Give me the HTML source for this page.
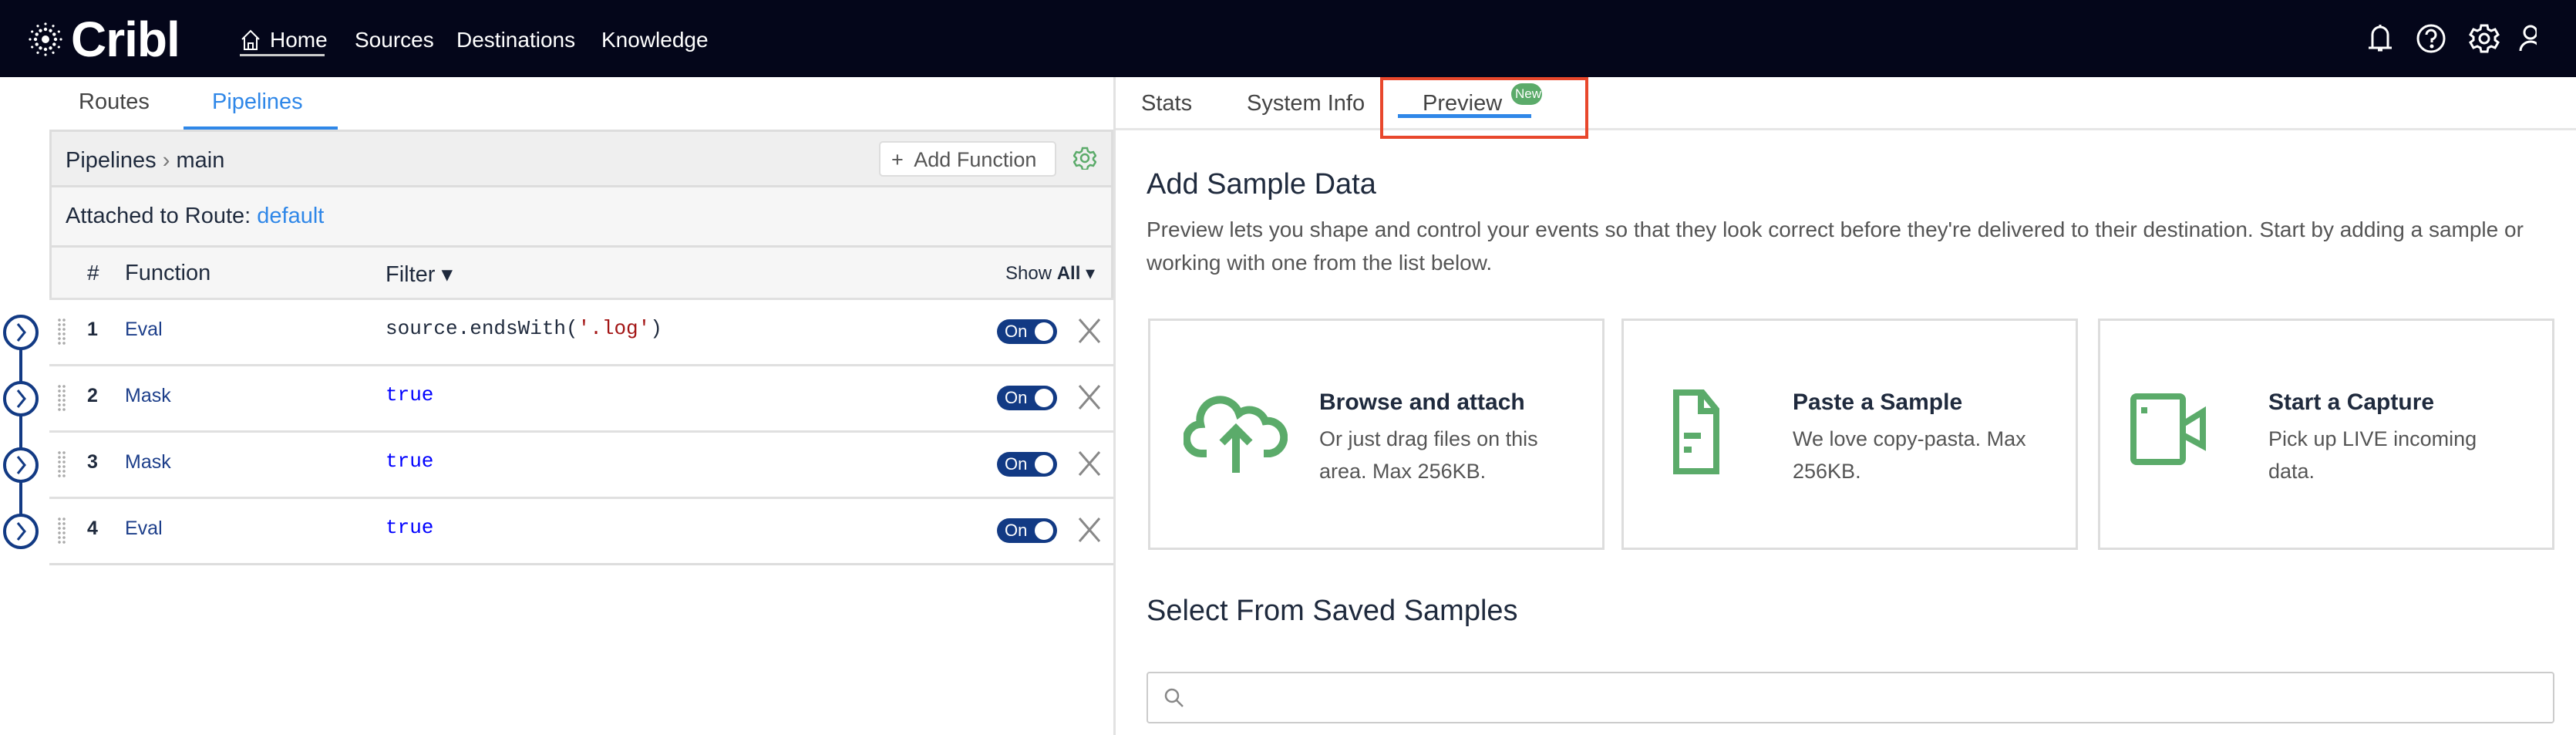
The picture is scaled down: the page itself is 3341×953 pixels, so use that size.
<!DOCTYPE html>
<html><head><meta charset="utf-8"><style>
*{box-sizing:border-box;margin:0;padding:0}
body{width:3341px;height:953px;overflow:hidden;background:#fff;font-family:"Liberation Sans",sans-serif;position:relative;color:#1f2a3d}
.a{position:absolute;white-space:nowrap}
.nav{left:0;top:0;width:3341px;height:100px;background:#04061a}
.nt{color:#fff;font-size:28px;top:36px}
.tab{font-size:29px;color:#444}
.row{left:64px;width:1380px;height:86px;border-top:3px solid #e0e0e0;background:#fff}
.num{font-weight:bold;font-size:25px;color:#1f2a3d}
.fn{font-size:25px;color:#1c3e8a}
.mono{font-family:"Liberation Mono",monospace;font-size:26px}
.tog{width:78px;height:32px;border-radius:16px;background:#123a84;color:#fff;font-size:22px;padding:3px 0 0 10px}
.tog::after{content:"";position:absolute;right:5px;top:4px;width:24px;height:24px;border-radius:50%;background:#fff}
.card{border:3px solid #ddd;top:413px;height:300px;width:592px}
.ct{font-size:30px;font-weight:bold;color:#1f2a3d}
.cd{font-size:27px;color:#555;line-height:42px;white-space:normal}
.drag{left:74px;width:12px;height:36px;background:radial-gradient(circle,#aaa 1.6px,transparent 2px) 0 0/6px 6px}
</style></head><body>
<div class="a nav"></div>
<svg class="a" style="left:36px;top:28px" width="46" height="46" viewBox="0 0 46 46"><g fill="#fff"><circle cx="23" cy="23" r="5"/>
<g id="r"><circle cx="23" cy="10" r="2.2"/><circle cx="23" cy="3" r="1.6"/></g>
<use href="#r" transform="rotate(30 23 23)"/><use href="#r" transform="rotate(60 23 23)"/><use href="#r" transform="rotate(90 23 23)"/><use href="#r" transform="rotate(120 23 23)"/><use href="#r" transform="rotate(150 23 23)"/><use href="#r" transform="rotate(180 23 23)"/><use href="#r" transform="rotate(210 23 23)"/><use href="#r" transform="rotate(240 23 23)"/><use href="#r" transform="rotate(270 23 23)"/><use href="#r" transform="rotate(300 23 23)"/><use href="#r" transform="rotate(330 23 23)"/></g></svg>
<div class="a" style="left:92px;top:14px;color:#fff;font-size:64px;font-weight:bold;letter-spacing:-1px">Cribl</div>
<svg class="a" style="left:312px;top:38px" width="26" height="28" viewBox="0 0 26 28" fill="none" stroke="#fff" stroke-width="2"><path d="M2 13L13 2l11 11M5 11v15h16V11M10 26v-8h6v8"/></svg>
<div class="a nt" style="left:350px">Home</div>
<div class="a" style="left:311px;top:70px;width:110px;height:3px;background:#ccc"></div>
<div class="a nt" style="left:460px">Sources</div>
<div class="a nt" style="left:592px">Destinations</div>
<div class="a nt" style="left:780px">Knowledge</div>
<svg class="a" style="left:3070px;top:30px" width="220" height="40" viewBox="0 0 220 40" fill="none" stroke="#fff" stroke-width="3">
<path d="M7 32V15a10 10 0 0 1 20 0v17zM2 32h30M14 35h6M17 2v3"/>
<circle cx="83" cy="20" r="17"/><path d="M77 15a6 6 0 1 1 7 6v4"/><circle cx="84" cy="30" r="1" fill="#fff"/>
<circle cx="152" cy="20" r="6"/><path d="M148 3h8l1 5 4 2 5-2 4 7-4 3v4l4 3-4 7-5-2-4 2-1 5h-8l-1-5-4-2-5 2-4-7 4-3v-4l-4-3 4-7 5 2 4-2z"/>
<circle cx="212" cy="12" r="8"/><path d="M199 36a13 12 0 0 1 26 0"/></svg>

<div class="a tab" style="left:102px;top:116px">Routes</div>
<div class="a tab" style="left:275px;top:116px;color:#2f87e8">Pipelines</div>
<div class="a" style="left:238px;top:164px;width:200px;height:5px;background:#2f87e8"></div>
<div class="a" style="left:64px;top:168px;width:1380px;height:565px;border:3px solid #ddd;background:#f6f6f6"></div>
<div class="a" style="left:64px;top:168px;width:1380px;height:75px;background:#efefef;border:3px solid #ddd"></div>
<div class="a" style="left:85px;top:192px;font-size:29px">Pipelines <span style="color:#777">›</span> main</div>
<div class="a" style="left:1140px;top:183px;width:230px;height:46px;border:2px solid #ddd;border-radius:5px;background:#fff;font-size:27px;color:#555;padding:7px 0 0 14px">+&nbsp; Add Function</div>
<svg class="a" style="left:1392px;top:190px" width="30" height="30" viewBox="0 0 30 30" fill="none" stroke="#5bab6a" stroke-width="2.5"><circle cx="15" cy="15" r="5"/><path d="M12 2h6l1 4 3 2 4-1 3 5-3 3v2l3 3-3 5-4-1-3 2-1 4h-6l-1-4-3-2-4 1-3-5 3-3v-2l-3-3 3-5 4 1 3-2z"/></svg>
<div class="a" style="left:85px;top:264px;font-size:29px">Attached to Route: <span style="color:#2f87e8">default</span></div>
<div class="a" style="left:64px;top:318px;width:1380px;height:3px;background:#ddd"></div>
<div class="a" style="left:113px;top:338px;font-size:28px">#</div>
<div class="a" style="left:162px;top:338px;font-size:29px">Function</div>
<div class="a" style="left:500px;top:338px;font-size:29px">Filter ▾</div>
<div class="a" style="left:1304px;top:340px;font-size:24px">Show <b>All</b> ▾</div>

<div class="a row" style="top:386px"></div>
<div class="a row" style="top:472px"></div>
<div class="a row" style="top:558px"></div>
<div class="a row" style="top:644px"></div>
<div class="a" style="left:64px;top:730px;width:1380px;height:3px;background:#ddd"></div>

<svg class="a" style="left:0;top:400px" width="54" height="320" viewBox="0 0 54 320" fill="#fff" stroke="#123a84" stroke-width="4">
<path d="M27 30v260" fill="none"/>
<circle cx="27" cy="31" r="21"/><circle cx="27" cy="117" r="21"/><circle cx="27" cy="203" r="21"/><circle cx="27" cy="289" r="21"/>
<path d="M23 20l9 11-9 11M23 106l9 11-9 11M23 192l9 11-9 11M23 278l9 11-9 11" fill="none" stroke-width="3"/></svg>

<div class="a drag" style="top:412px"></div><div class="a drag" style="top:498px"></div><div class="a drag" style="top:584px"></div><div class="a drag" style="top:670px"></div>
<div class="a num" style="left:113px;top:413px">1</div><div class="a fn" style="left:162px;top:413px">Eval</div>
<div class="a mono" style="left:500px;top:411px">source.endsWith(<span style="color:#a31515">'.log'</span>)</div>
<div class="a num" style="left:113px;top:499px">2</div><div class="a fn" style="left:162px;top:499px">Mask</div><div class="a mono" style="left:500px;top:497px;color:#0000ff">true</div>
<div class="a num" style="left:113px;top:585px">3</div><div class="a fn" style="left:162px;top:585px">Mask</div><div class="a mono" style="left:500px;top:583px;color:#0000ff">true</div>
<div class="a num" style="left:113px;top:671px">4</div><div class="a fn" style="left:162px;top:671px">Eval</div><div class="a mono" style="left:500px;top:669px;color:#0000ff">true</div>
<div class="a tog" style="left:1293px;top:414px">On</div><div class="a tog" style="left:1293px;top:500px">On</div><div class="a tog" style="left:1293px;top:586px">On</div><div class="a tog" style="left:1293px;top:672px">On</div>
<svg class="a" style="left:1398px;top:412px" width="30" height="300" viewBox="0 0 30 300" stroke="#888" stroke-width="3"><path d="M2 2l26 30M28 2L2 32M2 88l26 30M28 88L2 118M2 174l26 30M28 174L2 204M2 260l26 30M28 260L2 290"/></svg>

<div class="a" style="left:1444px;top:100px;width:3px;height:853px;background:#e2e2e2"></div>
<div class="a" style="left:1447px;top:166px;width:1894px;height:3px;background:#e6e6e6"></div>
<div class="a tab" style="left:1480px;top:118px">Stats</div>
<div class="a tab" style="left:1617px;top:118px">System Info</div>
<div class="a tab" style="left:1845px;top:118px">Preview</div>
<div class="a" style="left:1960px;top:108px;width:40px;height:28px;border-radius:14px;background:#5bab6a;color:#fff;font-size:17px;padding:4px 0 0 5px">New</div>
<div class="a" style="left:1813px;top:148px;width:173px;height:5px;background:#2f87e8"></div>
<div class="a" style="left:1790px;top:100px;width:270px;height:80px;border:4px solid #e8472c"></div>

<div class="a" style="left:1487px;top:218px;font-size:38px;color:#1f2a3d">Add Sample Data</div>
<div class="a" style="left:1487px;top:282px;font-size:28px;color:#555">Preview lets you shape and control your events so that they look correct before they're delivered to their destination. Start by adding a sample or</div>
<div class="a" style="left:1487px;top:325px;font-size:28px;color:#555">working with one from the list below.</div>

<div class="a card" style="left:1489px"></div>
<div class="a card" style="left:2103px"></div>
<div class="a card" style="left:2721px"></div>
<svg class="a" style="left:1535px;top:500px" width="135" height="115" viewBox="0 0 135 115" fill="none" stroke="#5bab6a" stroke-width="10"><path d="M30 88H24a19 19 0 0 1-2-38 26 26 0 0 1 50-14 22 22 0 0 1 34 10 20 20 0 0 1 6 42h-8"/><path d="M68 113V56M50 74l18-18 18 18"/></svg>
<svg class="a" style="left:2170px;top:505px" width="60" height="110" viewBox="0 0 60 110" fill="none" stroke="#5bab6a" stroke-width="8"><path d="M4 4h34l18 22v80H4zM36 4v24h20"/><path d="M14 60h22M14 78h10" stroke-width="8"/></svg>
<svg class="a" style="left:2763px;top:510px" width="100" height="95" viewBox="0 0 100 95" fill="none" stroke="#5bab6a" stroke-width="8"><rect x="4" y="4" width="64" height="85" rx="4"/><path d="M68 40l26-16v44L68 54"/><rect x="14" y="18" width="8" height="8" fill="#5bab6a" stroke="none"/></svg>
<div class="a ct" style="left:1711px;top:505px">Browse and attach</div>
<div class="a cd" style="left:1711px;top:548px;width:320px">Or just drag files on this area. Max 256KB.</div>
<div class="a ct" style="left:2325px;top:505px">Paste a Sample</div>
<div class="a cd" style="left:2325px;top:548px;width:345px">We love copy-pasta. Max 256KB.</div>
<div class="a ct" style="left:2942px;top:505px">Start a Capture</div>
<div class="a cd" style="left:2942px;top:548px;width:300px">Pick up LIVE incoming data.</div>

<div class="a" style="left:1487px;top:771px;font-size:38px;color:#1f2a3d">Select From Saved Samples</div>
<div class="a" style="left:1487px;top:871px;width:1826px;height:67px;border:2px solid #ccc;border-radius:4px"></div>
<svg class="a" style="left:1508px;top:890px" width="30" height="30" viewBox="0 0 30 30" fill="none" stroke="#888" stroke-width="2.5"><circle cx="12" cy="12" r="8"/><path d="M18 18l8 8"/></svg>
</body></html>
